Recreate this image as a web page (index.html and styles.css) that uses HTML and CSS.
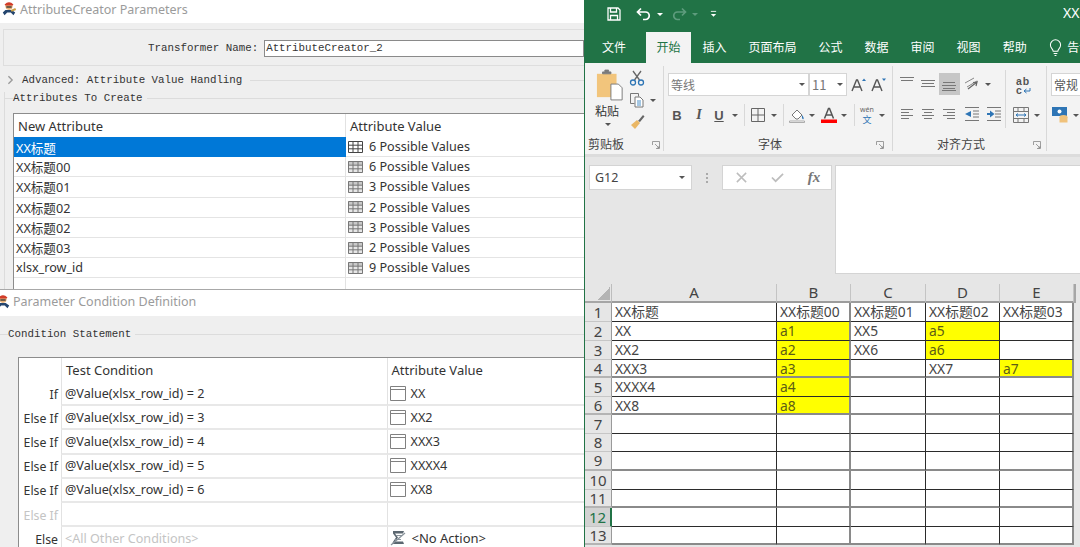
FILE: index.html
```html
<!DOCTYPE html>
<html lang="zh">
<head>
<meta charset="utf-8">
<title>FME and Excel</title>
<link rel="stylesheet" href="styles.css">
</head>
<body>
<div class="desktop">
  <div class="left">
    <section class="win win-top">
      <header class="title">
        <svg class="logo" viewBox="0 0 18 18"><circle cx="9" cy="6" r="4" fill="#e8b27a"/><path d="M4 4q5-5 10 0l-1 1H5z" fill="#d23c2a"/><path d="M5 10l-3 3 2 3 3-3 4 0 3 3 2-3-4-3z" fill="#24456e"/><path d="M6 6h6v1.500H6z" fill="#333"/><path d="M11 10l5-2 1 2-5 2z" fill="#caa144"/></svg>
        <span>AttributeCreator Parameters</span>
      </header>
      <div class="name-box">
        <label class="mono">Transformer Name:</label>
        <div class="name-input mono">AttributeCreator_2</div>
      </div>
      <div class="adv-row">
        <svg class="chev" viewBox="0 0 8 12"><path d="M1.500 1.500L6 6l-4.500 4.500" fill="none" stroke="#999" stroke-width="1.600"/></svg>
        <span class="mono">Advanced: Attribute Value Handling</span>
        <i class="rule"></i>
      </div>
      <div class="create-group">
        <div class="legend"><i class="stub"></i><span class="mono">Attributes To Create</span><i class="rule"></i></div>
        <div class="attr-table">
          <div class="attr-row head"><div class="c1">New Attribute</div><div class="c2">Attribute Value</div></div>
          <div class="attr-row"><div class="c1 sel">XX标题</div><div class="c2"><svg class="tbl strong" viewBox="0 0 15 12"><path d="M.500.500h14v11H.500zM.500 4.200h14M.500 7.800h14M5 .500v11M10 .500v11"/></svg>6 Possible Values</div></div>
          <div class="attr-row"><div class="c1">XX标题00</div><div class="c2"><svg class="tbl" viewBox="0 0 15 12"><path d="M.500.500h14v11H.500zM.500 4.200h14M.500 7.800h14M5 .500v11M10 .500v11"/></svg>6 Possible Values</div></div>
          <div class="attr-row"><div class="c1">XX标题01</div><div class="c2"><svg class="tbl" viewBox="0 0 15 12"><path d="M.500.500h14v11H.500zM.500 4.200h14M.500 7.800h14M5 .500v11M10 .500v11"/></svg>3 Possible Values</div></div>
          <div class="attr-row"><div class="c1">XX标题02</div><div class="c2"><svg class="tbl" viewBox="0 0 15 12"><path d="M.500.500h14v11H.500zM.500 4.200h14M.500 7.800h14M5 .500v11M10 .500v11"/></svg>2 Possible Values</div></div>
          <div class="attr-row"><div class="c1">XX标题02</div><div class="c2"><svg class="tbl" viewBox="0 0 15 12"><path d="M.500.500h14v11H.500zM.500 4.200h14M.500 7.800h14M5 .500v11M10 .500v11"/></svg>3 Possible Values</div></div>
          <div class="attr-row"><div class="c1">XX标题03</div><div class="c2"><svg class="tbl" viewBox="0 0 15 12"><path d="M.500.500h14v11H.500zM.500 4.200h14M.500 7.800h14M5 .500v11M10 .500v11"/></svg>2 Possible Values</div></div>
          <div class="attr-row"><div class="c1">xlsx_row_id</div><div class="c2"><svg class="tbl" viewBox="0 0 15 12"><path d="M.500.500h14v11H.500zM.500 4.200h14M.500 7.800h14M5 .500v11M10 .500v11"/></svg>9 Possible Values</div></div>
          <div class="attr-row"><div class="c1"></div><div class="c2"></div></div>
        </div>
      </div>
    </section>

    <section class="win win-bottom">
      <header class="title title2">
        <svg class="logo logo2" viewBox="0 0 18 18"><circle cx="9" cy="6" r="4" fill="#e8b27a"/><path d="M4 4q5-5 10 0l-1 1H5z" fill="#d23c2a"/><path d="M5 10l-3 3 2 3 3-3 4 0 3 3 2-3-4-3z" fill="#24456e"/><path d="M6 6h6v1.500H6z" fill="#333"/></svg>
        <span>Parameter Condition Definition</span>
      </header>
      <div class="legend legend2"><i class="stub"></i><span class="mono">Condition Statement</span><i class="rule"></i></div>
      <div class="cond-table">
        <div class="cond-row head"><div class="k"></div><div class="t">Test Condition</div><div class="v">Attribute Value</div></div>
        <div class="cond-row"><div class="k">If</div><div class="t">@Value(xlsx_row_id) = 2</div><div class="v"><svg class="val" viewBox="0 0 16 15"><path d="M.500.500h15v14H.500zM.500 3.500h15"/></svg>XX</div></div>
        <div class="cond-row"><div class="k">Else If</div><div class="t">@Value(xlsx_row_id) = 3</div><div class="v"><svg class="val" viewBox="0 0 16 15"><path d="M.500.500h15v14H.500zM.500 3.500h15"/></svg>XX2</div></div>
        <div class="cond-row"><div class="k">Else If</div><div class="t">@Value(xlsx_row_id) = 4</div><div class="v"><svg class="val" viewBox="0 0 16 15"><path d="M.500.500h15v14H.500zM.500 3.500h15"/></svg>XXX3</div></div>
        <div class="cond-row"><div class="k">Else If</div><div class="t">@Value(xlsx_row_id) = 5</div><div class="v"><svg class="val" viewBox="0 0 16 15"><path d="M.500.500h15v14H.500zM.500 3.500h15"/></svg>XXXX4</div></div>
        <div class="cond-row"><div class="k">Else If</div><div class="t">@Value(xlsx_row_id) = 6</div><div class="v"><svg class="val" viewBox="0 0 16 15"><path d="M.500.500h15v14H.500zM.500 3.500h15"/></svg>XX8</div></div>
        <div class="cond-row"><div class="k muted">Else If</div><div class="t"></div><div class="v"></div></div>
        <div class="cond-row"><div class="k">Else</div><div class="t muted">&lt;All Other Conditions&gt;</div><div class="v"><svg class="noact" viewBox="0 0 16 16"><path d="M3 1h11l-1 2.500H5l3 4-3 4h8l1 2.500H2l1.500-3L6 7.500 3 3.500z" fill="#5b6770"/><path d="M1 15L15 3" stroke="#8a949c" stroke-width="1.300"/><path d="M6 5.500h6M5 9.500h6" stroke="#8a949c"/></svg><span class="noact-text">&lt;No Action&gt;</span></div></div>
      </div>
    </section>
  </div>

  <section class="excel">
    <div class="qat">
      <svg class="q save" viewBox="0 0 14 14"><path d="M1 1h10l2 2v10H1zM3.500 1v4h6V1M3.500 13V8.500h7V13" fill="none" stroke="#fff" stroke-width="1.300"/></svg>
      <svg class="q undo" viewBox="0 0 16 14"><path d="M5 1.500L1.500 5 5 8.500M2 5h7.500a3.500 3.500 0 0 1 0 7.500H7" fill="none" stroke="#fff" stroke-width="1.700"/></svg>
      <i class="dd white d1"></i>
      <svg class="q redo" viewBox="0 0 16 14"><path d="M11 1.500L14.500 5 11 8.500M14 5H6.500a3.500 3.500 0 0 0 0 7.500H9" fill="none" stroke="#5e9c7d" stroke-width="1.700"/></svg>
      <i class="dd faded d2"></i>
      <svg class="q cust" viewBox="0 0 8 8"><path d="M1 1h6" stroke="#fff"/><path d="M1 4h6L4 7z" fill="#fff"/></svg>
      <span class="doc-title">XX</span>
    </div>
    <nav class="tabs">
      <span class="tab first">文件</span>
      <span class="tab active">开始</span>
      <span class="tab">插入</span>
      <span class="tab">页面布局</span>
      <span class="tab">公式</span>
      <span class="tab">数据</span>
      <span class="tab">审阅</span>
      <span class="tab">视图</span>
      <span class="tab">帮助</span>
      <svg class="bulb" viewBox="0 0 14 18"><path d="M4.500 12.500c0-2-3-3.500-3-6.800a5.500 5.500 0 0 1 11 0c0 3.300-3 4.800-3 6.800zM5 15h4M6 17h2" fill="none" stroke="#fff" stroke-width="1.100"/></svg>
      <span class="tab tell">告诉我</span>
    </nav>

    <div class="ribbon">
      <div class="group g-clip">
        <div class="gbody clip-body">
          <div class="paste">
            <svg class="paste-ic" viewBox="0 0 30 34"><path d="M1 5h21v25H1z" fill="#f2c57c"/><path d="M7 5h9V3h-2.500V1h-4v2H7z" fill="#7b7b7b" stroke="#7b7b7b"/><path d="M16 16h8l4 4v13H16z" fill="#fff" stroke="#777"/></svg>
            <span class="paste-label">粘贴</span>
            <i class="dd"></i>
          </div>
          <div class="clip-tools">
            <svg class="ic" viewBox="0 0 16 16"><path d="M4 1l6.500 9M12 1L5.500 10" stroke="#666" stroke-width="1.300"/><circle cx="4" cy="12.500" r="2.500" fill="none" stroke="#2e75b5" stroke-width="1.300"/><circle cx="12" cy="12.500" r="2.500" fill="none" stroke="#2e75b5" stroke-width="1.300"/></svg>
            <div class="tool-row">
              <svg class="ic" viewBox="0 0 16 16"><path d="M1.500 1.500h8v3M1.500 1.500v10h4" fill="none" stroke="#777"/><path d="M6 5h5l3 3v7H6z" fill="#fff" stroke="#777"/><path d="M8 9h4M8 11h4M8 13h4" stroke="#4a90c8"/></svg>
              <i class="dd"></i>
            </div>
            <svg class="ic" viewBox="0 0 16 16"><path d="M9 7l5-6 1.500 1.500L11 8z" fill="#666"/><path d="M2 11l6-5 3 3-5 6z" fill="#eab765"/></svg>
          </div>
        </div>
        <div class="glabel l-clip"><span>剪贴板</span><svg class="launch" viewBox="0 0 8 8"><path d="M.500 4V.500H7.500V7.500H4M3 3l4 4M5 7h2V5" fill="none" stroke="#888" stroke-width=".8"/></svg></div>
      </div>

      <div class="group g-font">
        <div class="gbody font-body">
          <div class="font-row1">
            <div class="combo c-font"><span>等线</span><i class="dd"></i></div>
            <div class="combo c-size"><span>11</span><i class="dd"></i></div>
            <svg class="ic fa" viewBox="0 0 16 16"><path d="M2 14L6.500 3h1L12 14M3.800 10h7" fill="none" stroke="#555" stroke-width="1.400"/><path d="M12 4l2-2.500L16 4z" fill="#2e75b5"/></svg>
            <svg class="ic fa" viewBox="0 0 16 16"><path d="M2 14L6.500 3h1L12 14M3.800 10h7" fill="none" stroke="#555" stroke-width="1.400"/><path d="M12 1.500l2 2.500 2-2.500z" fill="#2e75b5"/></svg>
          </div>
          <div class="font-row2">
            <span class="fb">B</span>
            <span class="fi">I</span>
            <span class="fu">U</span>
            <i class="dd"></i>
            <i class="vsep"></i>
            <svg class="ic" viewBox="0 0 16 16"><path d="M1.500 1.500h13v13h-13zM8 1.500v13M1.500 8h13" fill="none" stroke="#666"/></svg>
            <i class="dd"></i>
            <i class="vsep"></i>
            <svg class="ic" viewBox="0 0 16 16"><path d="M3 8l5-5 5 5-4 4H7z" fill="#fff" stroke="#777"/><path d="M13 8c1.500 2 2 3 1.500 4s-2 0-1.500-4z" fill="#2e75b5"/><path d="M.500 14h15v1.500H.500z" fill="#fff" stroke="#999" stroke-width=".8"/></svg>
            <i class="dd"></i>
            <svg class="ic" viewBox="0 0 16 16"><path d="M3.500 11.500L7.500 1.500h1l4 10M5 8h6" fill="none" stroke="#555" stroke-width="1.500"/><path d="M0 12.500h16V16H0z" fill="#f00"/></svg>
            <i class="dd"></i>
            <i class="vsep"></i>
            <div class="wen"><span class="py">wén</span><span class="zi">文</span></div>
            <i class="dd"></i>
          </div>
        </div>
        <div class="glabel l-font"><span>字体</span><svg class="launch" viewBox="0 0 8 8"><path d="M.500 4V.500H7.500V7.500H4M3 3l4 4M5 7h2V5" fill="none" stroke="#888" stroke-width=".8"/></svg></div>
      </div>

      <div class="group g-align">
        <div class="gbody align-body">
          <div class="align-main">
            <div class="al-row1">
              <svg class="ic" viewBox="0 0 16 16"><path d="M1 1.500h14M2 4.500h12" stroke="#777"/></svg>
              <svg class="ic" viewBox="0 0 16 16"><path d="M1 4.500h14M2 7.500h12M1 10.500h14" stroke="#777"/></svg>
              <div class="hl"><svg class="ic" viewBox="0 0 16 16"><path d="M2 6.500h12M1 9.500h14M2 12.500h12M1 14.500h14" stroke="#777"/></svg></div>
              <svg class="ic" viewBox="0 0 16 16"><path d="M1 7l9-5M3 11l10-6" stroke="#888"/><path d="M4 13l9-7-1 4M13 6l-4 .5" fill="none" stroke="#666" stroke-width="1.200"/></svg>
              <i class="dd"></i>
            </div>
            <div class="al-row2">
              <svg class="ic" viewBox="0 0 16 16"><path d="M2 3.500h12M2 6.500h8M2 9.500h12M2 12.500h8" stroke="#777"/></svg>
              <svg class="ic" viewBox="0 0 16 16"><path d="M2 3.500h12M4 6.500h8M2 9.500h12M4 12.500h8" stroke="#777"/></svg>
              <svg class="ic" viewBox="0 0 16 16"><path d="M2 3.500h12M6 6.500h8M2 9.500h12M6 12.500h8" stroke="#777"/></svg>
              <svg class="ic" viewBox="0 0 16 16"><path d="M1 1.500h14M9 5h6M9 8h6M9 11h6M1 14.500h14" stroke="#777"/><path d="M7 5v6L1 8z" fill="#2e75b5"/></svg>
              <svg class="ic" viewBox="0 0 16 16"><path d="M1 1.500h14M9 5h6M9 8h6M9 11h6M1 14.500h14" stroke="#777"/><path d="M1 8h4" stroke="#2e75b5" stroke-width="2"/><path d="M4 4.500V11.500L8.500 8z" fill="#2e75b5"/></svg>
            </div>
          </div>
          <i class="vsep tall"></i>
          <div class="wrap-col">
            <div class="wrap-ic"><span class="ab">ab</span><span class="c">c<svg class="ret" viewBox="0 0 8 6"><path d="M7 0v3H1.500M3.500 1L1 3l2.500 2" fill="none" stroke="#2e75b5"/></svg></span></div>
            <div class="tool-row merge">
              <svg class="ic big" viewBox="0 0 16 16"><path d="M.500.500h15v15H.500zM.500 4.500h15M.500 11.500h15M5 .500v4M11 .500v4M5 11.500v4M11 11.500v4" fill="none" stroke="#777"/><path d="M3 8h10M3 8l2-1.500M3 8l2 1.500M13 8l-2-1.500M13 8l-2 1.500" stroke="#2e75b5"/></svg>
              <i class="dd"></i>
            </div>
          </div>
        </div>
        <div class="glabel l-align"><span>对齐方式</span><svg class="launch" viewBox="0 0 8 8"><path d="M.500 4V.500H7.500V7.500H4M3 3l4 4M5 7h2V5" fill="none" stroke="#888" stroke-width=".8"/></svg></div>
      </div>

      <div class="group g-num">
        <div class="gbody num-body">
          <div class="combo c-num"><span>常规</span></div>
          <div class="tool-row num-tools">
            <svg class="ic money" viewBox="0 0 16 16"><path d="M0 0h15v9H0z" fill="#2e75b5"/><circle cx="7.500" cy="4.500" r="2" fill="#fff"/><ellipse cx="11.500" cy="10" rx="4" ry="2" fill="#f0c27b"/><path d="M7.500 10v5.500h8V10" fill="#f0c27b"/></svg>
            <i class="dd"></i>
          </div>
        </div>
      </div>
    </div>
    <div class="ribbon-shadow"></div>

    <div class="formula">
      <div class="namebox"><span>G12</span><i class="dd"></i></div>
      <div class="grip"><i></i><i></i><i></i></div>
      <div class="fx-btns">
        <svg class="fx-ic" viewBox="0 0 14 14"><path d="M2 2l10 10M12 2L2 12" stroke="#bdbdbd" stroke-width="1.600"/></svg>
        <svg class="fx-ic" viewBox="0 0 14 14"><path d="M1 7l4 4 8-8" fill="none" stroke="#bdbdbd" stroke-width="1.800"/></svg>
        <span class="fx">fx</span>
      </div>
      <div class="fx-input"></div>
    </div>

    <div class="sheet">
      <div class="r hd"><div class="corner"><i></i></div><div class="ch">A</div><div class="ch">B</div><div class="ch">C</div><div class="ch">D</div><div class="ch">E</div><div class="ch end"></div></div>
      <div class="r"><div class="rh">1</div><div class="x">XX标题</div><div class="x g">XX标题00</div><div class="x">XX标题01</div><div class="x">XX标题02</div><div class="x g">XX标题03</div><div class="o"></div></div>
      <div class="r"><div class="rh">2</div><div class="x">XX</div><div class="x g y">a1</div><div class="x">XX5</div><div class="x y">a5</div><div class="x g"></div><div class="o"></div></div>
      <div class="r"><div class="rh">3</div><div class="x">XX2</div><div class="x g y">a2</div><div class="x">XX6</div><div class="x y">a6</div><div class="x g"></div><div class="o"></div></div>
      <div class="r s"><div class="rh">4</div><div class="x">XXX3</div><div class="x g y">a3</div><div class="x"></div><div class="x">XX7</div><div class="x g y">a7</div><div class="o"></div></div>
      <div class="r"><div class="rh">5</div><div class="x">XXXX4</div><div class="x g y">a4</div><div class="x"></div><div class="x"></div><div class="x g"></div><div class="o"></div></div>
      <div class="r s"><div class="rh">6</div><div class="x">XX8</div><div class="x g y">a8</div><div class="x"></div><div class="x"></div><div class="x g"></div><div class="o"></div></div>
      <div class="r"><div class="rh">7</div><div class="x"></div><div class="x g"></div><div class="x"></div><div class="x"></div><div class="x g"></div><div class="o"></div></div>
      <div class="r"><div class="rh">8</div><div class="x"></div><div class="x g"></div><div class="x"></div><div class="x"></div><div class="x g"></div><div class="o"></div></div>
      <div class="r s"><div class="rh">9</div><div class="x"></div><div class="x g"></div><div class="x"></div><div class="x"></div><div class="x g"></div><div class="o"></div></div>
      <div class="r"><div class="rh">10</div><div class="x"></div><div class="x g"></div><div class="x"></div><div class="x"></div><div class="x g"></div><div class="o"></div></div>
      <div class="r s"><div class="rh">11</div><div class="x"></div><div class="x g"></div><div class="x"></div><div class="x"></div><div class="x g"></div><div class="o"></div></div>
      <div class="r cur"><div class="rh">12</div><div class="x"></div><div class="x g"></div><div class="x"></div><div class="x"></div><div class="x g"></div><div class="o"></div></div>
      <div class="r s"><div class="rh">13</div><div class="x"></div><div class="x g"></div><div class="x"></div><div class="x"></div><div class="x g"></div><div class="o"></div></div>
    </div>
  </section>
</div>
</body>
</html>
```
FILE: styles.css
```css
* { box-sizing: border-box; }
html, body { margin: 0; padding: 0; }
body { width: 1080px; height: 547px; overflow: hidden; background: #fff; font-family: "Noto Sans", "Noto Sans CJK SC", sans-serif; }
i { display: block; font-style: normal; }
svg { display: block; flex: none; }

.desktop { display: flex; width: 1080px; height: 547px; }
.left { width: 584px; flex: none; display: flex; flex-direction: column; overflow: hidden; }
.win { background: #efefef; overflow: hidden; }
.win-top { height: 289px; flex: none; }
.win-bottom { flex: 1; border-top: 1px solid #a8a8a8; }

.mono { font-family: "Liberation Mono", monospace; font-size: 10.800px; color: #333; white-space: nowrap; }
.title { height: 23px; background: #fff; display: flex; align-items: center; gap: 3px; color: #9b9b9b; font-size: 12.500px; padding-left: 1px; padding-bottom: 5px; }
.logo { width: 16px; height: 16px; }
.title2 { height: 26px; padding-left: 0; padding-bottom: 3px; padding-top: 0; gap: 2px; }
.logo2 { width: 16px; height: 16px; margin-left: -5px; }

.name-box { margin: 6px 0 0 3px; height: 37px; border: 1px solid #dedede; border-right: 0; padding: 10px 0 0 144px; display: flex; gap: 6px; align-items: flex-start; overflow: hidden; }
.name-box label { line-height: 17px; }
.name-input { flex: 1; height: 17px; line-height: 15px; background: #fff; border: 1px solid #8a8a8a; padding-left: 1px; }

.adv-row { display: flex; align-items: center; height: 12px; margin-top: 8px; padding-left: 7px; gap: 8px; }
.chev { width: 7px; height: 10px; }
.rule { flex: 1; height: 1px; background: #dcdcdc; }
.stub { width: 9px; height: 1px; background: #dcdcdc; }

.create-group { margin: 6px 0 0 4px; border-left: 1px solid #dcdcdc; }
.legend { display: flex; align-items: center; height: 12px; gap: 0; }
.legend .rule { margin-left: 4px; }
.create-group .stub { width: 8px; }

.attr-table { margin: 9px 0 0 8px; background: #fff; border-top: 1px solid #8c8c8c; border-left: 1px solid #8c8c8c; font-size: 12.600px; color: #333; }
.attr-row { display: grid; grid-template-columns: 332px 1fr; height: 20.2px; }
.attr-row.head { height: 23px; font-size: 13px; }
.attr-row.head .c1 { padding-left: 4px; border-bottom: 0; }
.attr-row.head .c2 { padding-left: 4px; border-bottom: 0; }
.c1, .c2 { display: flex; align-items: center; border-right: 1px solid #e2e2e2; border-bottom: 1px solid #e4e4e4; white-space: nowrap; overflow: hidden; }
.c1 { padding-left: 2px; }
.c2 { padding-left: 2px; border-right: 0; }
.c1.sel { background: #0078d7; color: #fff; border: 0; }
.tbl { width: 15px; height: 12px; margin-right: 6px; fill: none; stroke: #777; background: linear-gradient(#c9c9c9 0 4px, #e6e6e6 4px); }
.tbl.strong { stroke: #444; background: none; }

.legend2 { margin-top: 12px; }
.legend2 .stub { width: 8px; }
.cond-table { margin: 17px 0 0 18px; background: #fff; border-top: 1px solid #8c8c8c; border-left: 1px solid #8c8c8c; font-size: 12.600px; color: #333; }
.cond-row { display: grid; grid-template-columns: 42px 325.500px 1fr; height: 24.2px; white-space: nowrap; }
.cond-row.head { height: 24px; font-size: 13px; }
.cond-row > div { display: flex; align-items: center; }
.cond-row .k { justify-content: flex-end; padding-right: 3px; font-size: 12.300px; }
.cond-row .t { padding-left: 3px; border-left: 1px solid #e2e2e2; border-bottom: 2px solid #e8e8e8; }
.cond-row .v { padding-left: 2px; border-left: 1px solid #e2e2e2; border-bottom: 2px solid #e8e8e8; }
.cond-row.head .t, .cond-row.head .v { border-bottom: 0; }
.cond-row.head .t { padding-left: 4px; }
.cond-row.head .v { padding-left: 4px; }
.muted { color: #c4c4c4; }
.val { width: 16px; height: 15px; margin-right: 5px; fill: #fff; stroke: #808080; }
.noact { width: 16px; height: 16px; margin-right: 6px; }
.noact-text { font-size: 13px; }

.excel { flex: 1; min-width: 0; display: flex; flex-direction: column; background: #e6e6e6; border-left: 1px solid #217346; overflow: hidden; }
.qat { height: 32px; flex: none; background: #217346; display: flex; align-items: center; color: #fff; padding-left: 22px; padding-bottom: 4px; }
.save { width: 14px; height: 14px; margin-left: 0; }
.undo { width: 16px; height: 14px; margin-left: 15px; }
.dd { width: 0; height: 0; flex: none; border-left: 3px solid transparent; border-right: 3px solid transparent; border-top: 3px solid #555; }
.dd.white { border-top-color: #fff; }
.dd.faded { border-top-color: #5e9c7d; }
.d1 { margin-left: 5px; }
.redo { width: 16px; height: 14px; margin-left: 8px; }
.d2 { margin-left: 5px; }
.cust { width: 7px; height: 8px; margin-left: 12px; }
.doc-title { margin-left: auto; width: 17px; overflow: hidden; font-size: 14px; flex: none; white-space: nowrap; line-height: 18px; margin-top: -2px; }

.tabs { height: 31px; flex: none; background: #217346; display: flex; align-items: stretch; gap: 1px; padding-left: 6.500px; color: #fff; font-size: 12px; font-family: "Noto Sans CJK SC", sans-serif; white-space: nowrap; }
.tab { display: flex; align-items: center; padding: 0 10.500px 2px; height: 31px; }
.tab.first { margin-right: 8.500px; }
.tab.active { background: #f3f3f3; color: #217346; }
.bulb { width: 13px; height: 18px; margin: 7px 0 0 11px; }
.tell { padding-left: 4px; }

.ribbon { height: 91px; flex: none; background: #f3f3f3; padding-top: 3px; display: flex; overflow: hidden; }
.group { height: 85px; border-right: 1px solid #d8d8d8; display: flex; flex-direction: column; flex: none; }
.g-clip { width: 79px; }
.g-font { width: 229px; }
.g-align { width: 154px; }
.g-num { flex: 1; border-right: 0; min-width: 0; }
.gbody { height: 70px; flex: none; }
.glabel { height: 15px; flex: none; display: flex; justify-content: space-between; align-items: center; font-size: 12px; font-family: "Noto Sans CJK SC", sans-serif; color: #444; padding-right: 3px; }
.launch { width: 8px; height: 8px; margin-top: 3px; }
.l-clip { padding-left: 3px; }
.l-font { padding-left: 94px; padding-right: 8px; }
.l-align { padding-left: 44px; padding-right: 5px; }

.ic { width: 16px; height: 16px; }
.clip-body { display: flex; padding-left: 11px; padding-top: 3px; }
.paste { width: 28px; display: flex; flex-direction: column; align-items: flex-start; }
.paste-ic { width: 28px; height: 32px; }
.paste-label { font-size: 12px; font-family: "Noto Sans CJK SC", sans-serif; color: #333; line-height: 15px; margin-top: 2px; margin-left: -1px; white-space: nowrap; }
.paste .dd { margin-top: 5px; margin-left: 9px; }
.clip-tools { margin-left: 3px; width: 30px; padding-left: 2px; padding-top: 1px; display: flex; flex-direction: column; gap: 6px; }
.tool-row { display: flex; align-items: center; gap: 5px; }

.font-body { padding: 7px 0 0 4px; }
.font-row1 { display: flex; height: 23px; align-items: center; }
.combo { height: 23px; background: #fff; border: 1px solid #d5d5d5; display: flex; align-items: center; justify-content: space-between; padding: 0 3px 0 2px; font-size: 12px; color: #777; font-family: "Noto Sans CJK SC", sans-serif; }
.c-font { width: 141px; }
.c-size { width: 38px; font-size: 13px; }
.fa { margin-left: 3px; }
.fa + .fa { margin-left: 4px; }
.font-row2 { display: grid; grid-template-columns: 22px 22px 18px 14px 4px 24px 8px 10px 18px 12px 22px 8px 12px 14px 16px; justify-items: center; align-items: center; height: 22px; margin: 8px 0 0 -2px; font-size: 13px; color: #555; }
.fb { font-weight: 700; font-family: "Liberation Sans", sans-serif; }
.fi { font-style: italic; font-weight: 700; font-family: "Liberation Serif", serif; font-size: 14px; }
.fu { text-decoration: underline; font-weight: 700; font-family: "Liberation Sans", sans-serif; }
.vsep { width: 1px; height: 22px; background: #d8d8d8; }
.wen { display: flex; flex-direction: column; align-items: center; }
.py { font-size: 7px; line-height: 9px; color: #666; }
.zi { font-size: 9px; line-height: 11px; color: #2e75b5; font-family: "Noto Sans CJK SC", sans-serif; }

.align-body { display: flex; padding-left: 3px; padding-top: 4px; }
.align-main { width: 109px; flex: none; }
.al-row1 { display: grid; grid-template-columns: 22px 20px 22px 24px 8px; justify-items: center; align-items: center; height: 22px; margin-top: 3px; }
.al-row2 { display: grid; grid-template-columns: 22px 20px 22px 24px 20px; justify-items: center; align-items: center; height: 22px; margin-top: 8px; }
.hl { width: 21px; height: 22px; background: #c6c6c6; display: flex; align-items: center; justify-content: center; }
.tall { height: 58px; }
.wrap-col { margin-left: 7px; width: 38px; display: flex; flex-direction: column; padding-top: 7px; }
.wrap-ic { display: flex; flex-direction: column; font-family: "Liberation Sans", sans-serif; font-size: 10.500px; font-weight: 700; color: #555; line-height: 9px; padding-left: 3px; }
.wrap-ic .ab { letter-spacing: 1px; }
.wrap-ic .c { display: flex; align-items: center; gap: 1px; }
.ret { width: 8px; height: 6px; }
.merge { margin-top: 12px; }

.num-body { padding: 7px 0 0 4px; }
.c-num { width: 40px; border-right: 0; color: #555; }
.num-tools { margin-top: 11px; padding-left: 1px; }

.ribbon-shadow { height: 3px; flex: none; background: #dcdcdc; }

.formula { height: 127px; flex: none; display: flex; align-items: flex-start; padding: 8px 0 0 4px; }
.namebox { width: 103px; height: 25px; background: #fff; border: 1px solid #d4d4d4; display: flex; align-items: center; justify-content: space-between; padding: 0 6px 0 5px; font-size: 12.500px; color: #444; }
.grip { width: 30px; height: 25px; display: flex; flex-direction: column; align-items: center; justify-content: center; gap: 2px; }
.grip i { width: 2px; height: 2px; background: #aaa; }
.fx-btns { width: 110px; height: 25px; background: #fff; border: 1px solid #d4d4d4; display: grid; grid-template-columns: 36px 37px 36px; justify-items: center; align-items: center; }
.fx-ic { width: 13px; height: 13px; }
.fx { font-family: "Liberation Serif", serif; font-style: italic; font-weight: 700; font-size: 15px; color: #777; }
.fx-input { flex: 1; height: 109px; margin-left: 3px; background: #fff; border: 1px solid #d4d4d4; border-right: 0; }

.sheet { flex: 1; display: grid; grid-template-columns: 27px 165px 74px 75px 74px 74px 6px; grid-template-rows: 19px 19px 19px 19px 18px 19px 18px 19px 18px 19px 19px 18px 19px 18px 3px; }
.r { display: contents; }
.corner, .ch, .rh { background: #e6e6e6; color: #444; display: flex; align-items: center; justify-content: center; font-size: 15px; }
.corner { border-bottom: 2px solid #a6a6a6; border-right: 1px solid #bdbdbd; padding: 3px 1px 1px 4px; }
.corner i { width: 13px; height: 13px; background: linear-gradient(135deg, transparent 50%, #b4b4b4 50%); margin-left: auto; }
.ch { border-right: 1px solid #c4c4c4; border-bottom: 2px solid #9c9c9c; line-height: 1; }
.ch.end { border-bottom: 0; border-right: 0; border-left: 2px solid #a6a6a6; }
.rh { border-bottom: 1px solid #c6c6c6; border-right: 1px solid #9a9a9a; line-height: 1; }
.x { background: #fff; border-right: 1px solid #2b2b2b; border-bottom: 1px solid #2b2b2b; padding-left: 3px; font-size: 13.800px; line-height: 18px; color: #454545; white-space: nowrap; overflow: hidden; }
.x.g { border-right: 2px solid #8a8a8a; }
.x.y { background: #ff0; color: #5d5d16; }
.o { background: #e6e6e6; }
.r.s .x { border-bottom: 2px solid #8a8a8a; }
.r.s .rh { border-bottom: 2px solid #b4b4b4; }
.cur .rh { background: #d2d2d2; color: #217346; border-right: 2px solid #217346; }
```
